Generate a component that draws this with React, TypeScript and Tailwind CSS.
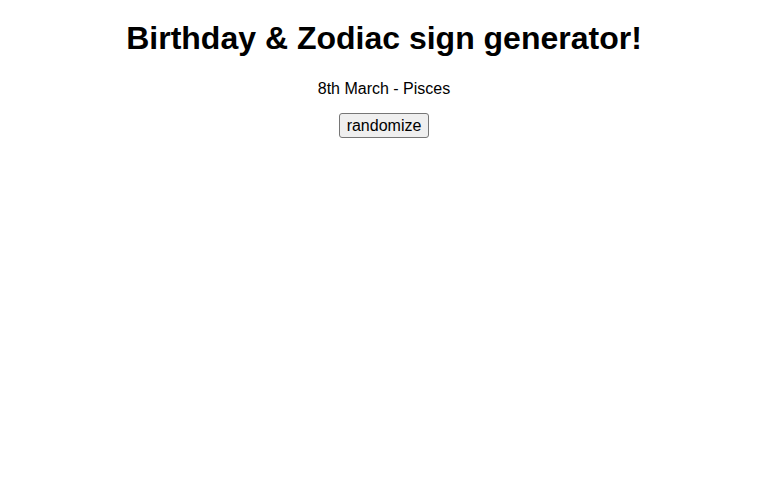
import React, { useState } from "react";

const options = [
  "8th March - Pisces",
  "21st April - Taurus",
  "3rd July - Cancer",
  "15th October - Libra",
];

export default function App() {
  const [i, setI] = useState(0);
  return (
    <div className="bg-white text-black text-center" style={{ fontFamily: '"Liberation Sans", Arial, sans-serif' }}>
      <h1 className="text-[32px] font-bold leading-[37px] pt-[20px] pb-[23px]">Birthday &amp; Zodiac sign generator!</h1>
      <div className="text-base leading-[18px]">{options[i]}</div>
      <div className="mt-[15px] flex justify-center">
        <button
          onClick={() => setI((i + 1) % options.length)}
          className="h-[25px] px-[7px] border border-[#767676] rounded-[3px] bg-[#efefef] text-base leading-[18px] text-black"
        >
          randomize
        </button>
      </div>
    </div>
  );
}
